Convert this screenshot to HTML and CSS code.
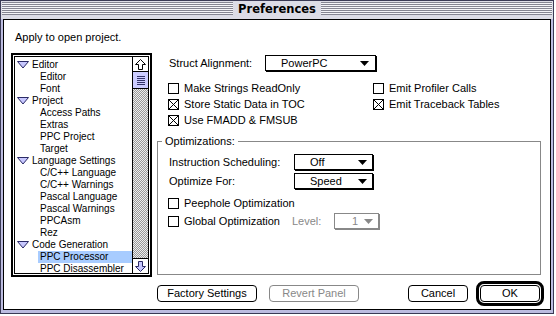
FILE: index.html
```html
<!DOCTYPE html>
<html>
<head>
<meta charset="utf-8">
<title>Preferences</title>
<link rel="stylesheet" href="styles.css">
</head>
<body>
<div class="window">
  <div class="titlebar">
    <div class="stripes"></div>
    <div class="title">Preferences</div>
    <div class="stripes"></div>
  </div>
  <div class="content">
    <div class="hint">Apply to open project.</div>
    <div class="main">
      <div class="listring">
        <div class="listbox">
          <ul class="items">
            <li class="grp"><svg class="tri" viewBox="0 0 12 8"><polygon points="0.5,0.5 11.5,0.5 6,7" /></svg>Editor</li>
            <li class="sub"><span>Editor</span></li>
            <li class="sub"><span>Font</span></li>
            <li class="grp"><svg class="tri" viewBox="0 0 12 8"><polygon points="0.5,0.5 11.5,0.5 6,7" /></svg>Project</li>
            <li class="sub"><span>Access Paths</span></li>
            <li class="sub"><span>Extras</span></li>
            <li class="sub"><span>PPC Project</span></li>
            <li class="sub"><span>Target</span></li>
            <li class="grp"><svg class="tri" viewBox="0 0 12 8"><polygon points="0.5,0.5 11.5,0.5 6,7" /></svg>Language Settings</li>
            <li class="sub"><span>C/C++ Language</span></li>
            <li class="sub"><span>C/C++ Warnings</span></li>
            <li class="sub"><span>Pascal Language</span></li>
            <li class="sub"><span>Pascal Warnings</span></li>
            <li class="sub"><span>PPCAsm</span></li>
            <li class="sub"><span>Rez</span></li>
            <li class="grp"><svg class="tri" viewBox="0 0 12 8"><polygon points="0.5,0.5 11.5,0.5 6,7" /></svg>Code Generation</li>
            <li class="sub selected"><span>PPC Processor</span></li>
            <li class="sub"><span>PPC Disassembler</span></li>
          </ul>
          <div class="scrollbar">
            <div class="sb-btn up"><svg viewBox="0 0 11 11" width="11" height="11"><path d="M5.5 0.5 L10.5 5.5 L7.5 5.5 L7.5 10.5 L3.5 10.5 L3.5 5.5 L0.5 5.5 Z" /></svg></div>
            <div class="sb-thumb"><svg viewBox="0 0 8 9" width="8" height="9"><path d="M0 0.5H8M0 2.5H8M0 4.5H8M0 6.5H8M0 8.5H8" /></svg></div>
            <div class="sb-track"></div>
            <div class="sb-btn down"><svg viewBox="0 0 11 11" width="11" height="11"><path d="M5.5 10.5 L10.5 5.5 L7.5 5.5 L7.5 0.5 L3.5 0.5 L3.5 5.5 L0.5 5.5 Z" /></svg></div>
          </div>
        </div>
      </div>
      <div class="panel">
        <div class="top">
          <div class="struct">
            <span class="label">Struct Alignment:</span>
            <div class="popup w-power"><span>PowerPC</span><svg class="arrow" viewBox="0 0 9 5"><polygon points="0,0 9,0 4.5,5" /></svg></div>
          </div>
          <div class="checks">
            <div class="check"><span class="box"></span>Make Strings ReadOnly</div>
            <div class="check"><span class="box"></span>Emit Profiler Calls</div>
            <div class="check"><span class="box"><svg viewBox="0 0 9 9"><path d="M0 0L9 9M9 0L0 9" /></svg></span>Store Static Data in TOC</div>
            <div class="check"><span class="box"><svg viewBox="0 0 9 9"><path d="M0 0L9 9M9 0L0 9" /></svg></span>Emit Traceback Tables</div>
            <div class="check"><span class="box"><svg viewBox="0 0 9 9"><path d="M0 0L9 9M9 0L0 9" /></svg></span>Use FMADD &amp; FMSUB</div>
          </div>
        </div>
        <div class="group">
          <div class="group-head"><span class="tick"></span><span class="group-title">Optimizations:</span><span class="rule"></span></div>
          <div class="group-body">
            <div class="opt-row">
              <span class="label">Instruction Scheduling:</span>
              <div class="popup w-opt"><span>Off</span><svg class="arrow" viewBox="0 0 9 5"><polygon points="0,0 9,0 4.5,5" /></svg></div>
            </div>
            <div class="opt-row r2">
              <span class="label">Optimize For:</span>
              <div class="popup w-opt"><span>Speed</span><svg class="arrow" viewBox="0 0 9 5"><polygon points="0,0 9,0 4.5,5" /></svg></div>
            </div>
            <div class="opt-row r3">
              <div class="check"><span class="box"></span>Peephole Optimization</div>
            </div>
            <div class="opt-row r4">
              <div class="check global"><span class="box"></span>Global Optimization</div>
              <span class="level">Level:</span>
              <div class="popup w-level disabled"><span>1</span><svg class="arrow" viewBox="0 0 9 5"><polygon points="0,0 9,0 4.5,5" /></svg></div>
            </div>
          </div>
        </div>
      </div>
    </div>
    <div class="buttons">
      <button class="btn factory">Factory Settings</button>
      <button class="btn revert">Revert Panel</button>
      <span class="spacer"></span>
      <button class="btn cancel">Cancel</button>
      <span class="ring"><button class="btn ok">OK</button></span>
    </div>
  </div>
</div>
</body>
</html>
```
FILE: styles.css
```css
* { box-sizing: border-box; }
html, body { margin: 0; padding: 0; }
body {
  width: 556px;
  height: 316px;
  overflow: hidden;
  background: #fff;
  font-family: "Liberation Sans", Arial, sans-serif;
  font-size: 11px;
  color: #000;
}
.window {
  width: 554px;
  height: 314px;
  border: 1px solid #3a3a55;
  background: #bcbce0;
  padding: 0 2px 3px;
  display: flex;
  flex-direction: column;
}
.titlebar {
  height: 18px;
  margin: 0 -2px;
  padding: 1px 1px 0;
  display: flex;
  align-items: flex-start;
  background: #dcdce6;
}
.stripes {
  flex: 1;
  height: 13px;
  background: repeating-linear-gradient(to bottom, #858592 0 1px, #f4f4f8 1px 2px);
}
.title {
  padding: 0 5px;
  font-family: "DejaVu Sans", sans-serif;
  font-weight: bold;
  font-size: 11.5px;
  line-height: 15px;
}
.content {
  flex: 1;
  background: #fff;
  border: 1px solid #000;
  padding: 11px 0 0 7px;
  display: flex;
  flex-direction: column;
}
.hint {
  margin-left: 4px;
  height: 12px;
  line-height: 12px;
}
.main {
  display: flex;
  margin-top: 10px;
  height: 224px;
}
.listring {
  width: 141px;
  height: 224px;
  border: 2px solid #000;
  padding: 1px;
}
.listbox {
  height: 100%;
  border: 1px solid #000;
  display: flex;
}
.items {
  list-style: none;
  margin: 0;
  padding: 2px 0 0;
  flex: 1;
  overflow: hidden;
  font-size: 10px;
}
.items li {
  height: 12px;
  line-height: 12px;
  white-space: nowrap;
  display: flex;
  align-items: center;
}
.grp { padding-left: 2px; }
.tri {
  width: 12px;
  height: 8px;
  margin-right: 3px;
  fill: #c8c8ff;
  stroke: #2a2a66;
  stroke-width: 1;
}
.sub { padding-left: 23px; }
.sub span {
  flex: 1;
  height: 12px;
  padding-left: 2px;
}
.sub.selected span { background: #a8ccff; }
.scrollbar {
  width: 16px;
  border-left: 1px solid #000;
  display: flex;
  flex-direction: column;
}
.sb-btn {
  height: 15px;
  display: flex;
  align-items: center;
  justify-content: center;
  background: #fff;
}
.sb-btn svg { fill: #fff; stroke: #000; stroke-width: 1; }
.sb-btn.up { border-bottom: 1px solid #000; }
.sb-btn.down { border-top: 1px solid #000; }
.sb-btn.down svg { fill: #c8c8ff; stroke: #2a2a66; }
.sb-thumb {
  height: 17px;
  border-bottom: 1px solid #000;
  background: #ccccff;
  display: flex;
  align-items: center;
  justify-content: center;
}
.sb-thumb svg { stroke: #33336a; stroke-width: 1; }
.sb-track {
  flex: 1;
  background: repeating-conic-gradient(#999 0 25%, #eee 0 50%) 0 0 / 2px 2px;
}
.panel {
  margin-left: 5px;
  width: 384px;
  display: flex;
  flex-direction: column;
}
.top { padding-left: 11px; }
.struct {
  display: flex;
  align-items: center;
  height: 16px;
  margin-top: 2px;
}
.struct .label { width: 97px; padding-left: 1px; }
.popup {
  height: 16px;
  border: 1px solid #000;
  box-shadow: 1px 1px 0 #000;
  padding: 0 5px 0 15px;
  display: flex;
  align-items: center;
  justify-content: space-between;
  line-height: 14px;
}
.w-power { width: 111px; padding-right: 6px; }
.w-opt { width: 79px; }
.w-level { width: 45px; padding-left: 17px; }
.arrow { width: 9px; height: 5px; fill: #000; }
.popup.disabled { color: #888; border-color: #888; box-shadow: 1px 1px 0 #888; }
.popup.disabled .arrow { fill: #888; }
.checks {
  display: grid;
  grid-template-columns: 205px auto;
  grid-auto-rows: 16px;
  margin-top: 9px;
}
.check {
  display: flex;
  align-items: center;
  white-space: nowrap;
}
.box {
  width: 11px;
  height: 11px;
  border: 1px solid #000;
  margin-right: 5px;
  flex: none;
}
.box svg {
  display: block;
  width: 9px;
  height: 9px;
  stroke: #000;
  stroke-width: 1;
}
.group { margin-top: 7px; }
.group-head {
  display: flex;
  height: 12px;
}
.tick {
  width: 5px;
  height: 6px;
  align-self: flex-end;
  border-top: 1px solid #888;
  border-left: 1px solid #888;
}
.group-title {
  padding: 0 3px;
  line-height: 12px;
}
.rule {
  flex: 1;
  height: 6px;
  align-self: flex-end;
  border-top: 1px solid #888;
  border-right: 1px solid #888;
}
.group-body {
  height: 128px;
  border: 1px solid #888;
  border-top: none;
  padding: 7px 0 0 11px;
}
.opt-row {
  display: flex;
  align-items: center;
  height: 16px;
}
.opt-row .label { width: 125px; }
.opt-row.r2 { margin-top: 3px; }
.opt-row.r3 { margin-top: 6px; }
.opt-row.r4 { margin-top: 2px; }
.opt-row .check { margin-left: -1px; }
.check.global { width: 124px; }
.level { color: #888; margin-right: 6px; width: 36px; }
.buttons {
  display: flex;
  align-items: center;
  height: 25px;
  margin: 4px 6px 0 146px;
}
.btn {
  height: 17px;
  margin: 0;
  padding: 0;
  border: 1px solid #000;
  border-radius: 4px;
  background: #fff;
  color: #000;
  font-family: "Liberation Sans", Arial, sans-serif;
  font-size: 11px;
  line-height: 15px;
  text-align: center;
}
.factory { width: 100px; }
.revert { width: 90px; margin-left: 12px; color: #888; border-color: #888; }
.spacer { flex: 1; }
.cancel { width: 60px; }
.ring {
  margin-left: 8px;
  border: 3px solid #000;
  border-radius: 8px;
  padding: 1px;
  display: flex;
}
.ok { width: 60px; }
```
